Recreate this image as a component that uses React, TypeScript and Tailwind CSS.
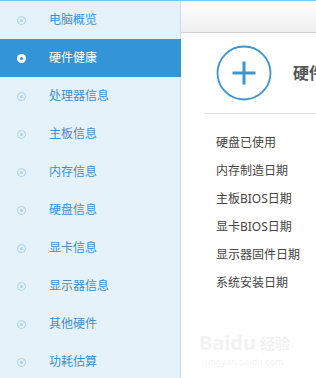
import React from "react";

const items = ["电脑概览", "硬件健康", "处理器信息", "主板信息", "内存信息", "硬盘信息", "显卡信息", "显示器信息", "其他硬件", "功耗估算"];
const rows = ["硬盘已使用", "内存制造日期", "主板BIOS日期", "显卡BIOS日期", "显示器固件日期", "系统安装日期"];

export default function App() {
  return (
    <div
      className="w-[316px] h-[378px] overflow-hidden bg-white flex flex-col"
      style={{ fontFamily: '"Noto Sans", "Noto Sans CJK SC", sans-serif' }}
    >
      <div className="h-px bg-[#7cc6f0] shrink-0" />
      <div className="flex flex-1 min-h-0">
        <div className="w-[181px] shrink-0 bg-[#e6f2f9] border-r border-[#bfe0f4] flex flex-col">
          {items.map((t, i) => {
            const active = i === 1;
            return (
              <div
                key={t}
                className={`h-[38px] shrink-0 flex items-center ${active ? "bg-[#3394d6] -mr-px" : ""}`}
              >
                <div className="w-[49px] flex justify-center pl-[1px] pr-[8px]">
                  {active ? (
                    <div className="w-[9px] h-[9px] rounded-full bg-white flex items-center justify-center">
                      <div className="w-[3px] h-[3px] rounded-full bg-[#3394d6]" />
                    </div>
                  ) : (
                    <div className="w-[9px] h-[9px] rounded-full border border-[#a8d1ee] flex items-center justify-center">
                      <div className="w-[3px] h-[3px] rounded-full bg-[#a8d1ee]" />
                    </div>
                  )}
                </div>
                <span className={`text-[12px] leading-none ${active ? "text-white" : "text-[#3b8fd3]"}`}>{t}</span>
              </div>
            );
          })}
        </div>
        <div className="flex-1 min-w-0 flex flex-col relative">
          <div className="h-[32px] shrink-0 bg-gradient-to-b from-white to-[#efefef] border-b border-[#d2d2d2]" />
          <div className="flex items-center pl-[35px] h-[80px] shrink-0">
            <svg width="56" height="56" viewBox="0 0 56 56" className="shrink-0">
              <circle cx="28" cy="28" r="26.5" fill="none" stroke="#3a95d6" strokeWidth="1.8" />
              <path d="M16.5 28 H39.5 M28 16.5 V39.5" stroke="#3a95d6" strokeWidth="3" />
            </svg>
            <span className="ml-[21px] text-[16px] font-bold text-[#555] whitespace-nowrap">硬件健康</span>
          </div>
          <div className="ml-[23px] h-px bg-[#e2e2e2] shrink-0" />
          <div className="pl-[35px] pt-[15px] flex flex-col">
            {rows.map((r) => (
              <div key={r} className="h-[28px] flex items-center text-[12px] text-[#444] whitespace-nowrap">
                {r}
              </div>
            ))}
          </div>
          <div className="absolute left-[18px] top-[332px] flex flex-col items-center opacity-[0.12] pointer-events-none">
            <div className="flex items-center">
              <span className="text-[20px] font-bold text-[#999] leading-none">Bai</span>
              <span className="text-[20px] font-bold text-[#999] leading-none">du</span>
              <span className="text-[15px] font-bold text-[#999] leading-none ml-1">经验</span>
            </div>
            <span className="text-[9px] text-[#999] leading-none mt-1">jingyan.baidu.com</span>
          </div>
        </div>
      </div>
    </div>
  );
}
